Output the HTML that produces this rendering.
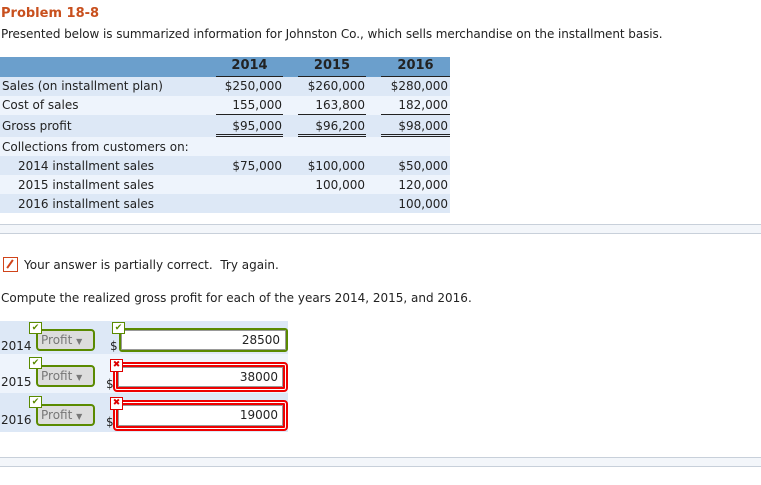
<!DOCTYPE html>
<html><head><style>
body{margin:0;width:761px;height:485px;background:#fff;font-family:"DejaVu Sans",Verdana,sans-serif;font-size:12px;color:#222;position:relative;overflow:hidden}
.a{position:absolute;white-space:nowrap}
.num{text-align:right}
.band{position:absolute;left:0;width:761px;height:8px;background:#f3f6fa;border-top:1px solid #c8d0da;border-bottom:1px solid #c8d0da}
.chk{position:absolute;width:11px;height:10px;border:1px solid #5a8a00;background:#fff;color:#5a8a00;font-size:9px;line-height:10px;text-align:center}
.x{position:absolute;width:11px;height:11px;border:1px solid #d00;background:#fff;color:#d00;font-size:9px;font-weight:bold;line-height:11px;text-align:center}
.dd{position:absolute;left:36px;width:52px;height:18px;border:2px solid #5a8a00;border-radius:4px;background:#ddd;color:#777;font-size:12px;line-height:18px;padding-left:3px;box-sizing:content-box}
.in{position:absolute;background:#fff;text-align:right;font-size:12px;box-sizing:border-box}
.g{border:2px solid #5a8a00;border-radius:3px;box-shadow:inset 0 0 0 1px #999;padding-right:6px}
.r{border:2px solid #e00;border-radius:4px;box-shadow:inset 0 0 0 1px #fff,inset 0 0 0 3px #e00,inset 0 0 0 4px #999;padding-right:8px}
.h{font-weight:bold;font-size:13px;text-align:center;top:58px}
</style></head><body>
<div class="a" style="left:1px;top:6px;font-size:13px;font-weight:bold;color:#c8501e">Problem 18-8</div>
<div class="a" style="left:1px;top:27px;letter-spacing:-0.07px">Presented below is summarized information for Johnston Co., which sells merchandise on the installment basis.</div>

<div class="a" style="left:0;top:57px;width:450px;height:20px;background:#6b9fcc"></div>
<div class="a" style="left:0;top:77px;width:450px;height:19px;background:#dde8f6"></div>
<div class="a" style="left:0;top:96px;width:450px;height:19px;background:#eef4fc"></div>
<div class="a" style="left:0;top:115px;width:450px;height:22px;background:#dde8f6"></div>
<div class="a" style="left:0;top:137px;width:450px;height:19px;background:#eef4fc"></div>
<div class="a" style="left:0;top:156px;width:450px;height:19px;background:#dde8f6"></div>
<div class="a" style="left:0;top:175px;width:450px;height:19px;background:#eef4fc"></div>
<div class="a" style="left:0;top:194px;width:450px;height:19px;background:#dde8f6"></div>

<div class="a h" style="left:216px;width:67px">2014</div>
<div class="a h" style="left:298px;width:68px">2015</div>
<div class="a h" style="left:381px;width:69px">2016</div>
<div class="a" style="left:216px;top:76px;width:67px;border-top:1px solid #222"></div>
<div class="a" style="left:298px;top:76px;width:68px;border-top:1px solid #222"></div>
<div class="a" style="left:381px;top:76px;width:69px;border-top:1px solid #222"></div>
<div class="a" style="left:216px;top:114px;width:67px;border-top:1px solid #222"></div>
<div class="a" style="left:298px;top:114px;width:68px;border-top:1px solid #222"></div>
<div class="a" style="left:381px;top:114px;width:69px;border-top:1px solid #222"></div>
<div class="a" style="left:216px;top:134px;width:67px;height:1px;border-top:1px solid #222;border-bottom:1px solid #222"></div>
<div class="a" style="left:298px;top:134px;width:68px;height:1px;border-top:1px solid #222;border-bottom:1px solid #222"></div>
<div class="a" style="left:381px;top:134px;width:69px;height:1px;border-top:1px solid #222;border-bottom:1px solid #222"></div>

<div class="a" style="left:2px;top:79px">Sales (on installment plan)</div>
<div class="a" style="left:2px;top:98px">Cost of sales</div>
<div class="a" style="left:2px;top:119px">Gross profit</div>
<div class="a" style="left:2px;top:140px">Collections from customers on:</div>
<div class="a" style="left:18px;top:159px">2014 installment sales</div>
<div class="a" style="left:18px;top:178px">2015 installment sales</div>
<div class="a" style="left:18px;top:197px">2016 installment sales</div>

<div class="a num" style="left:200px;width:82px;top:79px">$250,000</div>
<div class="a num" style="left:280px;width:85px;top:79px">$260,000</div>
<div class="a num" style="left:360px;width:88px;top:79px">$280,000</div>
<div class="a num" style="left:200px;width:82px;top:98px">155,000</div>
<div class="a num" style="left:280px;width:85px;top:98px">163,800</div>
<div class="a num" style="left:360px;width:88px;top:98px">182,000</div>
<div class="a num" style="left:200px;width:82px;top:119px">$95,000</div>
<div class="a num" style="left:280px;width:85px;top:119px">$96,200</div>
<div class="a num" style="left:360px;width:88px;top:119px">$98,000</div>
<div class="a num" style="left:200px;width:82px;top:159px">$75,000</div>
<div class="a num" style="left:280px;width:85px;top:159px">$100,000</div>
<div class="a num" style="left:360px;width:88px;top:159px">$50,000</div>
<div class="a num" style="left:280px;width:85px;top:178px">100,000</div>
<div class="a num" style="left:360px;width:88px;top:178px">120,000</div>
<div class="a num" style="left:360px;width:88px;top:197px">100,000</div>

<div class="band" style="top:224px"></div>

<div class="a" style="left:3px;top:257px;width:13px;height:13px;border:1px solid #d0441a;background:#fff"></div>
<div class="a" style="left:9px;top:259px;width:2px;height:10px;background:#d0441a;transform:rotate(35deg)"></div>
<div class="a" style="left:24px;top:258px">Your answer is partially correct.&nbsp; Try again.</div>
<div class="a" style="left:1px;top:291px">Compute the realized gross profit for each of the years 2014, 2015, and 2016.</div>

<div class="a" style="left:0;top:321px;width:288px;height:33px;background:#dde8f6"></div>
<div class="a" style="left:0;top:354px;width:288px;height:39px;background:#eef4fc"></div>
<div class="a" style="left:0;top:393px;width:288px;height:39px;background:#dde8f6"></div>

<div class="a" style="left:1px;top:339px">2014</div>
<div class="dd" style="top:329px">Profit <span style="font-size:8px">▼</span></div>
<div class="chk" style="left:29px;top:322px">✔</div>
<div class="a" style="left:110px;top:339px">$</div>
<div class="in g" style="left:119px;top:328px;width:169px;height:24px;line-height:20px">28500</div>
<div class="chk" style="left:112px;top:322px">✔</div>

<div class="a" style="left:1px;top:375px">2015</div>
<div class="dd" style="top:365px">Profit <span style="font-size:8px">▼</span></div>
<div class="chk" style="left:29px;top:357px">✔</div>
<div class="a" style="left:106px;top:377px">$</div>
<div class="in r" style="left:113px;top:362px;width:175px;height:30px;line-height:26px">38000</div>
<div class="x" style="left:110px;top:359px">✖</div>

<div class="a" style="left:1px;top:413px">2016</div>
<div class="dd" style="top:404px">Profit <span style="font-size:8px">▼</span></div>
<div class="chk" style="left:29px;top:396px">✔</div>
<div class="a" style="left:106px;top:415px">$</div>
<div class="in r" style="left:113px;top:400px;width:175px;height:31px;line-height:27px">19000</div>
<div class="x" style="left:110px;top:397px">✖</div>

<div class="band" style="top:457px"></div>
</body></html>
